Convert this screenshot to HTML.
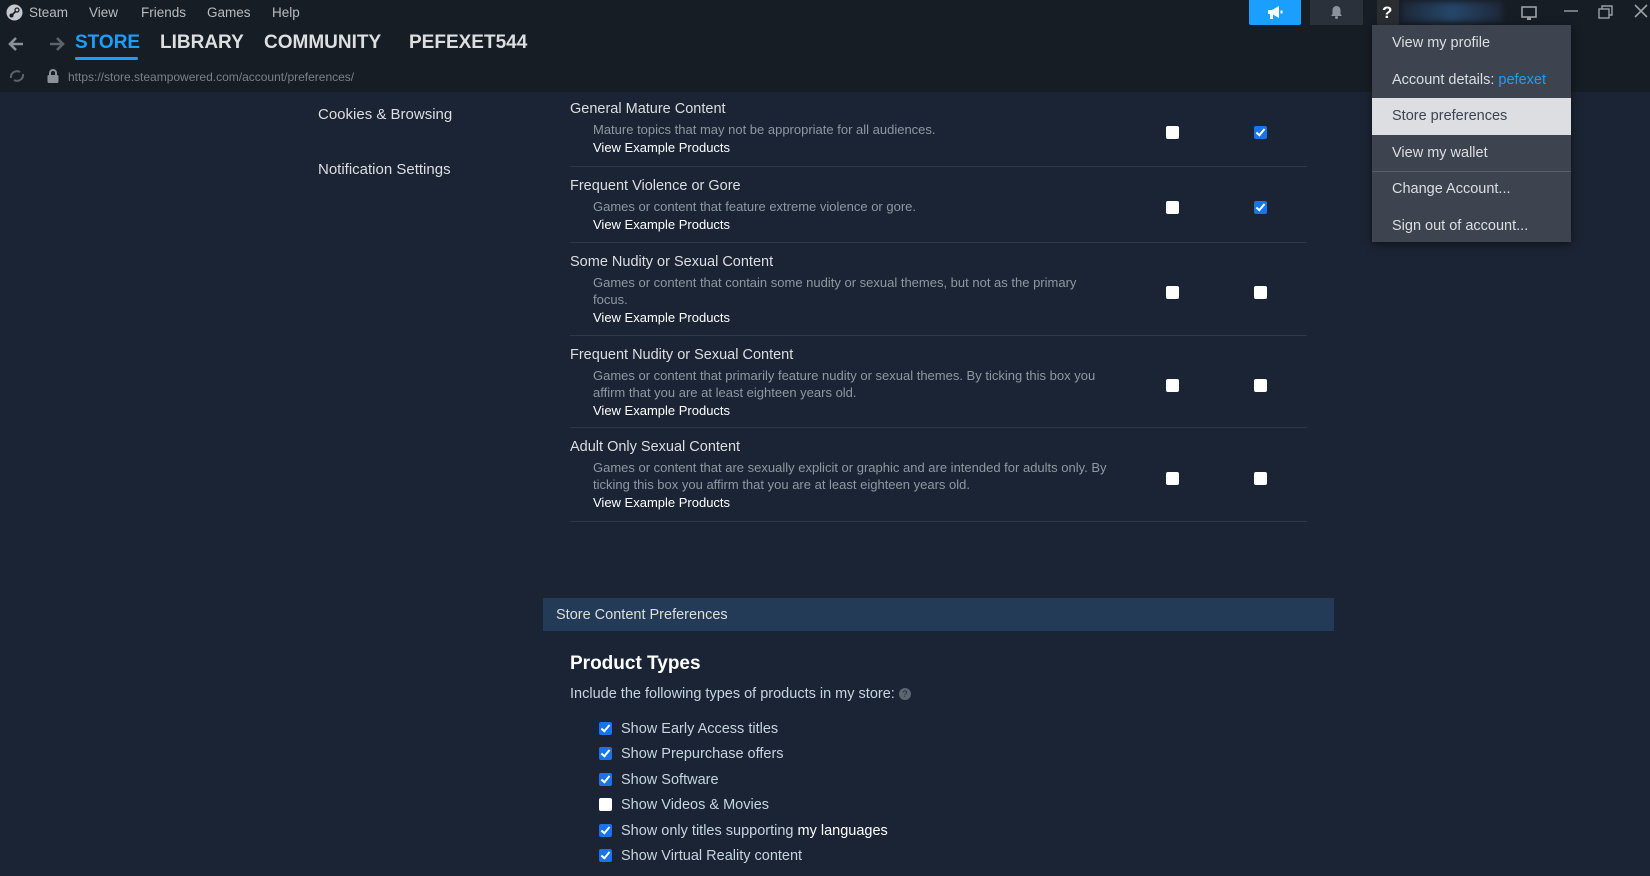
<!DOCTYPE html>
<html><head><meta charset="utf-8"><style>
*{margin:0;padding:0;box-sizing:border-box}
body{width:1650px;height:876px;overflow:hidden;background:#1b2434;font-family:"Liberation Sans",sans-serif;position:relative;color:#fff}
.a{position:absolute;white-space:nowrap}
#hdr{position:absolute;left:0;top:0;width:1650px;height:92px;background:#171d25}
.menu{font-size:13.5px;color:#b8bcbf;top:5px}
.nav{font-size:19px;font-weight:bold;color:#dcdedf;top:32px}
.t{font-size:14.5px;color:#dcdedf}
.d{font-size:13px;color:#8f98a0;line-height:17.4px;width:515px;white-space:normal}
.v{font-size:13px;color:#fff}
.sep{position:absolute;left:570px;width:737px;height:1px;background:#2c3848}
.cb{position:absolute;width:13px;height:13px;background:#fff;border-radius:2px}
.cb.on{background:#1a73e8}
.cb.on::after{content:"";position:absolute;left:4px;top:1px;width:3px;height:7px;border:solid #fff;border-width:0 2px 2px 0;transform:rotate(40deg)}
.dd{position:absolute;left:1372px;top:25px;width:199px;height:217px;background:#3d4450;box-shadow:0 2px 8px rgba(0,0,0,.5)}
.di{position:absolute;left:0;width:199px;height:36.5px;font-size:14.5px;color:#dcdedf;padding:10px 0 0 20px}
.ci{position:absolute;left:621px;font-size:14.5px;color:#c6d4df}
</style></head><body>
<div id="hdr"></div>
<svg class="a" style="left:6px;top:4px" width="17" height="17" viewBox="0 0 17 17"><circle cx="8.5" cy="8.5" r="8" fill="#c5c8cc"/><circle cx="11" cy="6" r="2.6" fill="#171d25"/><circle cx="11" cy="6" r="1.4" fill="#c5c8cc"/><circle cx="5.5" cy="11.5" r="2" fill="#171d25"/><path d="M6 11 L10 7" stroke="#171d25" stroke-width="1.6"/></svg>
<div class="a menu" style="left:29px">Steam</div>
<div class="a menu" style="left:89px">View</div>
<div class="a menu" style="left:141px">Friends</div>
<div class="a menu" style="left:207px">Games</div>
<div class="a menu" style="left:272px">Help</div>
<svg class="a" style="left:7px;top:35px" width="60" height="18" viewBox="0 0 60 18"><path d="M16 9H3M9 3L3 9l6 6" stroke="#8b929a" stroke-width="2.6" fill="none"/><path d="M43 9h13M50 3l6 6-6 6" stroke="#5c636b" stroke-width="2.6" fill="none"/></svg>
<div class="a nav" style="left:75px;color:#1a9fff">STORE</div>
<div class="a" style="left:75px;top:57px;width:63px;height:3px;background:#1a9fff;border-radius:2px"></div>
<div class="a nav" style="left:160px">LIBRARY</div>
<div class="a nav" style="left:264px">COMMUNITY</div>
<div class="a nav" style="left:409px">PEFEXET544</div>
<svg class="a" style="left:8px;top:69px" width="18" height="14" viewBox="0 0 18 14"><path d="M3 9a6 6 0 0 1 9-6M15 5a6 6 0 0 1-9 6" stroke="#5c636b" stroke-width="2" fill="none"/></svg>
<svg class="a" style="left:46px;top:68px" width="14" height="16" viewBox="0 0 14 16"><rect x="1.5" y="7" width="11" height="8" rx="1.5" fill="#8b929a"/><path d="M4 7V5a3 3 0 0 1 6 0v2" stroke="#8b929a" stroke-width="2" fill="none"/></svg>
<div class="a" style="left:68px;top:70px;font-size:12px;color:#7a8189">https://store.steampowered.com/account/preferences/</div>

<div class="a" style="left:1249px;top:0;width:52px;height:25px;background:#1a9fff;border-radius:0 0 2px 2px"></div>
<svg class="a" style="left:1266px;top:5px" width="18" height="15" viewBox="0 0 18 15"><path d="M2 5h4l7-4v12l-7-4H2z" fill="#fff"/><rect x="4" y="9" width="3" height="5" fill="#fff"/><rect x="14.5" y="5.5" width="2" height="3" fill="#fff"/></svg>
<div class="a" style="left:1310px;top:0;width:53px;height:25px;background:#2a313b"></div>
<svg class="a" style="left:1330px;top:5px" width="13" height="14" viewBox="0 0 13 14"><path d="M6.5 1a4 4 0 0 0-4 4v4L1 11h11l-1.5-2V5a4 4 0 0 0-4-4z" fill="#8b929a"/><circle cx="6.5" cy="12.5" r="1.5" fill="#8b929a"/></svg>
<div class="a" style="left:1377px;top:0;width:22px;height:25px;background:#2a2e33"></div>
<div class="a" style="left:1382px;top:3px;font-size:17px;font-weight:bold;color:#fff">?</div>
<div class="a" style="left:1402px;top:2px;width:100px;height:20px;background:linear-gradient(90deg,#1e2838,#26476a,#1e2838);filter:blur(3px)"></div>
<svg class="a" style="left:1521px;top:4px" width="130" height="18" viewBox="0 0 130 18"><rect x="1" y="3" width="14" height="10" fill="none" stroke="#9aa0a6" stroke-width="1.6"/><rect x="6" y="13" width="4" height="3" fill="#9aa0a6"/><path d="M43 7h14" stroke="#9aa0a6" stroke-width="1.4"/><rect x="78" y="5" width="10" height="9" fill="none" stroke="#9aa0a6" stroke-width="1.4"/><path d="M81 5V2h10v9h-3" fill="none" stroke="#9aa0a6" stroke-width="1.4"/><path d="M114 1l12 12M126 1l-12 12" stroke="#9aa0a6" stroke-width="1.6"/></svg>

<div class="a" style="left:318px;top:106px;font-size:15px;color:#dcdedf">Cookies &amp; Browsing</div>
<div class="a" style="left:318px;top:161px;font-size:15px;color:#dcdedf">Notification Settings</div>

<div class="a t" style="left:570px;top:101px">General Mature Content</div>
<div class="a d" style="left:593px;top:121px">Mature topics that may not be appropriate for all audiences.</div>
<div class="a v" style="left:593px;top:140px">View Example Products</div>
<div class="cb" style="left:1166px;top:126px"></div><div class="cb on" style="left:1254px;top:126px"></div>
<div class="sep" style="top:166px"></div>

<div class="a t" style="left:570px;top:178px">Frequent Violence or Gore</div>
<div class="a d" style="left:593px;top:198px">Games or content that feature extreme violence or gore.</div>
<div class="a v" style="left:593px;top:217px">View Example Products</div>
<div class="cb" style="left:1166px;top:201px"></div><div class="cb on" style="left:1254px;top:201px"></div>
<div class="sep" style="top:242px"></div>

<div class="a t" style="left:570px;top:254px">Some Nudity or Sexual Content</div>
<div class="a d" style="left:593px;top:274px">Games or content that contain some nudity or sexual themes, but not as the primary focus.</div>
<div class="a v" style="left:593px;top:310px">View Example Products</div>
<div class="cb" style="left:1166px;top:286px"></div><div class="cb" style="left:1254px;top:286px"></div>
<div class="sep" style="top:335px"></div>

<div class="a t" style="left:570px;top:347px">Frequent Nudity or Sexual Content</div>
<div class="a d" style="left:593px;top:367px">Games or content that primarily feature nudity or sexual themes. By ticking this box you affirm that you are at least eighteen years old.</div>
<div class="a v" style="left:593px;top:403px">View Example Products</div>
<div class="cb" style="left:1166px;top:379px"></div><div class="cb" style="left:1254px;top:379px"></div>
<div class="sep" style="top:427px"></div>

<div class="a t" style="left:570px;top:439px">Adult Only Sexual Content</div>
<div class="a d" style="left:593px;top:459px">Games or content that are sexually explicit or graphic and are intended for adults only. By ticking this box you affirm that you are at least eighteen years old.</div>
<div class="a v" style="left:593px;top:495px">View Example Products</div>
<div class="cb" style="left:1166px;top:472px"></div><div class="cb" style="left:1254px;top:472px"></div>
<div class="sep" style="top:521px"></div>

<div class="a" style="left:543px;top:598px;width:791px;height:33px;background:#233b57"></div>
<div class="a" style="left:556px;top:607px;font-size:14.5px;color:#dcdedf">Store Content Preferences</div>
<div class="a" style="left:570px;top:653px;font-size:19px;font-weight:bold;color:#fff">Product Types</div>
<div class="a" style="left:570px;top:686px;font-size:14.5px;color:#c6d4df">Include the following types of products in my store: <span style="display:inline-block;width:12px;height:12px;border-radius:50%;background:#5c6670;color:#1b2434;font-size:9px;text-align:center;line-height:12px;vertical-align:1px">?</span></div>

<div class="cb on" style="left:599px;top:722px"></div><div class="ci" style="top:721px">Show Early Access titles</div>
<div class="cb on" style="left:599px;top:747px"></div><div class="ci" style="top:746px">Show Prepurchase offers</div>
<div class="cb on" style="left:599px;top:773px"></div><div class="ci" style="top:772px">Show Software</div>
<div class="cb" style="left:599px;top:798px"></div><div class="ci" style="top:797px">Show Videos &amp; Movies</div>
<div class="cb on" style="left:599px;top:824px"></div><div class="ci" style="top:823px">Show only titles supporting <span style="color:#fff">my languages</span></div>
<div class="cb on" style="left:599px;top:849px"></div><div class="ci" style="top:848px">Show Virtual Reality content</div>

<div class="dd">
<div class="di" style="top:0">View my profile</div>
<div class="di" style="top:36.5px">Account details: <span style="color:#1a9fff">pefexet</span></div>
<div class="di" style="top:73px;background:#dcdee2;color:#3d4450">Store preferences</div>
<div class="di" style="top:109.5px">View my wallet</div>
<div class="a" style="left:0;top:145.5px;width:199px;height:1px;background:#56606c"></div>
<div class="di" style="top:146px">Change Account...</div>
<div class="di" style="top:182.5px">Sign out of account...</div>
</div>
</body></html>
